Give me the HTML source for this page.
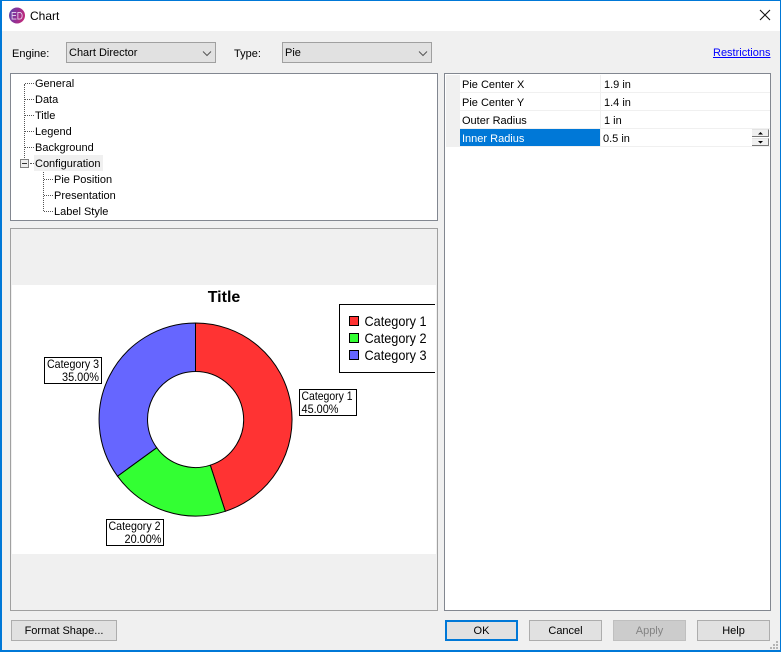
<!DOCTYPE html>
<html><head><meta charset="utf-8"><title>Chart</title>
<style>
html,body{margin:0;padding:0;}
body{width:781px;height:652px;position:relative;overflow:hidden;background:#f0f0f0;font-family:"Liberation Sans",sans-serif;font-size:11px;color:#000;}
.a{position:absolute;box-sizing:border-box;}
.t{position:absolute;white-space:nowrap;line-height:14px;height:14px;}
.btn{position:absolute;box-sizing:border-box;height:21px;top:620px;width:73px;background:#e1e1e1;border:1px solid #adadad;text-align:center;line-height:19px;padding-top:1px;}
.combo{position:absolute;box-sizing:border-box;top:42px;height:21px;width:150px;background:#e1e1e1;border:1px solid #a0a0a0;line-height:19px;padding-left:2px;padding-top:1px;}
.v{position:absolute;width:1px;border-left:1px dotted #555;}
.h{position:absolute;height:1px;border-top:1px dotted #555;}
</style></head><body>
<div class="a" style="left:0;top:0;width:781px;height:652px;border:1px solid #0078d7;border-left-width:2px;border-bottom-width:2px;z-index:9;pointer-events:none"></div>
<div class="a" style="left:0;top:0;width:781px;height:31px;background:#fff"></div>
<svg class="a" style="left:9px;top:7px" width="16" height="17" viewBox="0 0 16 17"><defs><linearGradient id="g" x1="0" y1="0" x2="1" y2="0.3"><stop offset="0" stop-color="#5a4bab"/><stop offset="0.55" stop-color="#8f3096"/><stop offset="1" stop-color="#bd2a7c"/></linearGradient></defs><circle cx="8" cy="8.5" r="8" fill="url(#g)"/><text x="8" y="12.5" text-anchor="middle" font-family="Liberation Sans" font-size="11" fill="#e6d8f0" textLength="12" lengthAdjust="spacingAndGlyphs">ED</text></svg>
<div class="t" style="left:30px;top:9px;font-size:12px">Chart</div>
<svg class="a" style="left:759px;top:9px" width="12" height="12"><path d="M1 1L11 11M11 1L1 11" stroke="#111" stroke-width="1.1" fill="none"/></svg>

<div class="t" style="left:12px;top:47px">Engine:</div>
<div class="combo" style="left:66px">Chart Director<svg class="a" style="right:3px;top:8px" width="10" height="6"><path d="M1 .5L5 4.5L9 .5" stroke="#555" fill="none"/></svg></div>
<div class="t" style="left:234px;top:47px">Type:</div>
<div class="combo" style="left:282px">Pie<svg class="a" style="right:3px;top:8px" width="10" height="6"><path d="M1 .5L5 4.5L9 .5" stroke="#555" fill="none"/></svg></div>
<div class="t" style="left:713px;top:46px;color:#0000ff;text-decoration:underline;font-size:11px">Restrictions</div>

<!-- Tree -->
<div class="a" style="left:10px;top:73px;width:428px;height:148px;background:#fff;border:1px solid #828790"></div>
<div class="v" style="left:24px;top:84px;height:74px"></div>
<div class="v" style="left:43px;top:170px;height:41px"></div>
<div class="h" style="left:25px;top:83px;width:9px"></div>
<div class="h" style="left:25px;top:99px;width:9px"></div>
<div class="h" style="left:25px;top:115px;width:9px"></div>
<div class="h" style="left:25px;top:131px;width:9px"></div>
<div class="h" style="left:25px;top:147px;width:9px"></div>
<div class="h" style="left:30px;top:163px;width:4px"></div>
<div class="h" style="left:44px;top:179px;width:9px"></div>
<div class="h" style="left:44px;top:195px;width:9px"></div>
<div class="h" style="left:44px;top:211px;width:9px"></div>
<div class="a" style="left:20px;top:159px;width:9px;height:9px;border:1px solid #808080;background:#eee"></div>
<div class="a" style="left:22px;top:163px;width:5px;height:1px;background:#333"></div>
<div class="a" style="left:34px;top:155px;width:69px;height:16px;background:#f0f0f0"></div>
<div class="t" style="left:35px;top:77px">General</div>
<div class="t" style="left:35px;top:93px">Data</div>
<div class="t" style="left:35px;top:109px">Title</div>
<div class="t" style="left:35px;top:125px">Legend</div>
<div class="t" style="left:35px;top:141px">Background</div>
<div class="t" style="left:35px;top:157px">Configuration</div>
<div class="t" style="left:54px;top:173px">Pie Position</div>
<div class="t" style="left:54px;top:189px">Presentation</div>
<div class="t" style="left:54px;top:205px">Label Style</div>

<!-- Chart panel -->
<div class="a" style="left:10px;top:228px;width:428px;height:383px;border:1px solid #a0a0a0;background:#f0f0f0"></div>
<div class="a" style="left:12px;top:285px;width:424px;height:269px;background:#fff"></div>
<svg class="a" style="left:12px;top:285px" width="423" height="269" viewBox="12 285 423 269" font-family="Liberation Sans">
<text x="224" y="302" text-anchor="middle" font-size="16" font-weight="bold">Title</text>
<g stroke="#000" stroke-width="1" transform="translate(-0.5 0)">
<path d="M196 323A96.5 96.5 0 0 1 225.8 511.3L210.8 465.2A48 48 0 0 0 196 371.5Z" fill="#ff3333"/>
<path d="M225.8 511.3A96.5 96.5 0 0 1 118 476.2L157.2 447.7A48 48 0 0 0 210.8 465.2Z" fill="#33ff33"/>
<path d="M118 476.2A96.5 96.5 0 0 1 196 323L196 371.5A48 48 0 0 0 157.2 447.7Z" fill="#6666ff"/>
</g>
<g fill="#fff" stroke="#000"><rect x="339.5" y="304.5" width="110" height="68"/></g>
<g stroke="#000"><rect x="349.5" y="316.5" width="9" height="9" fill="#ff3333"/><rect x="349.5" y="333.5" width="9" height="9" fill="#33ff33"/><rect x="349.5" y="350.5" width="9" height="9" fill="#6666ff"/></g>
<g font-size="14"><text x="364.5" y="326" textLength="62" lengthAdjust="spacingAndGlyphs">Category 1</text><text x="364.5" y="343" textLength="62" lengthAdjust="spacingAndGlyphs">Category 2</text><text x="364.5" y="360" textLength="62" lengthAdjust="spacingAndGlyphs">Category 3</text></g>
<g fill="#fff" stroke="#000"><rect x="299.5" y="389.5" width="57" height="26"/><rect x="44.5" y="357.5" width="57" height="26"/><rect x="106.5" y="519.5" width="57" height="26"/></g>
<g font-size="12"><text x="301.5" y="400" textLength="51" lengthAdjust="spacingAndGlyphs">Category 1</text><text x="301.5" y="413" textLength="37" lengthAdjust="spacingAndGlyphs">45.00%</text>
<text x="47" y="368" textLength="52" lengthAdjust="spacingAndGlyphs">Category 3</text><text x="62" y="381" textLength="37" lengthAdjust="spacingAndGlyphs">35.00%</text>
<text x="108.5" y="530" textLength="52" lengthAdjust="spacingAndGlyphs">Category 2</text><text x="124.5" y="543" textLength="37" lengthAdjust="spacingAndGlyphs">20.00%</text></g>
</svg>

<!-- Properties -->
<div class="a" style="left:444px;top:73px;width:327px;height:538px;background:#fff;border:1px solid #828790"></div>
<div class="a" style="left:446px;top:75px;width:14px;height:72px;background:#f0f0f0"></div>
<div class="a" style="left:460px;top:92px;width:310px;height:1px;background:#f0f0f0"></div>
<div class="a" style="left:460px;top:110px;width:310px;height:1px;background:#f0f0f0"></div>
<div class="a" style="left:460px;top:128px;width:310px;height:1px;background:#f0f0f0"></div>
<div class="a" style="left:460px;top:146px;width:310px;height:1px;background:#f0f0f0"></div>
<div class="a" style="left:600px;top:75px;width:1px;height:72px;background:#f0f0f0"></div>
<div class="a" style="left:460px;top:129px;width:140px;height:17px;background:#0078d7"></div>
<div class="t" style="left:462px;top:78px">Pie Center X</div>
<div class="t" style="left:462px;top:96px">Pie Center Y</div>
<div class="t" style="left:462px;top:114px">Outer Radius</div>
<div class="t" style="left:462px;top:132px;color:#fff">Inner Radius</div>
<div class="t" style="left:604px;top:78px">1.9 in</div>
<div class="t" style="left:604px;top:96px">1.4 in</div>
<div class="t" style="left:604px;top:114px">1 in</div>
<div class="t" style="left:603px;top:132px">0.5 in</div>
<div class="a" style="left:752px;top:129px;width:17px;height:8px;background:#f0f0f0;border-top:1px solid #e3e3e3;border-right:1px solid #777;border-bottom:1px solid #777"></div>
<div class="a" style="left:752px;top:138px;width:17px;height:8px;background:#f0f0f0;border-top:1px solid #e3e3e3;border-right:1px solid #777;border-bottom:1px solid #777"></div>
<svg class="a" style="left:757px;top:131px" width="7" height="14"><path d="M3.5 1L6 3.5H1Z M1 10H6L3.5 12.5Z" fill="#000"/></svg>

<!-- Buttons -->
<div class="btn" style="left:11px;width:106px">Format Shape...</div>
<div class="btn" style="left:445px;border:2px solid #0078d7;line-height:17px">OK</div>
<div class="btn" style="left:529px">Cancel</div>
<div class="btn" style="left:613px;background:#cccccc;border-color:#bfbfbf;color:#838383">Apply</div>
<div class="btn" style="left:697px">Help</div>
<svg class="a" style="left:768px;top:640px" width="11" height="10"><g fill="#b5b5b5"><rect x="8" y="1" width="2" height="2"/><rect x="5" y="4" width="2" height="2"/><rect x="8" y="4" width="2" height="2"/><rect x="2" y="7" width="2" height="2"/><rect x="5" y="7" width="2" height="2"/><rect x="8" y="7" width="2" height="2"/></g></svg>
</body></html>
